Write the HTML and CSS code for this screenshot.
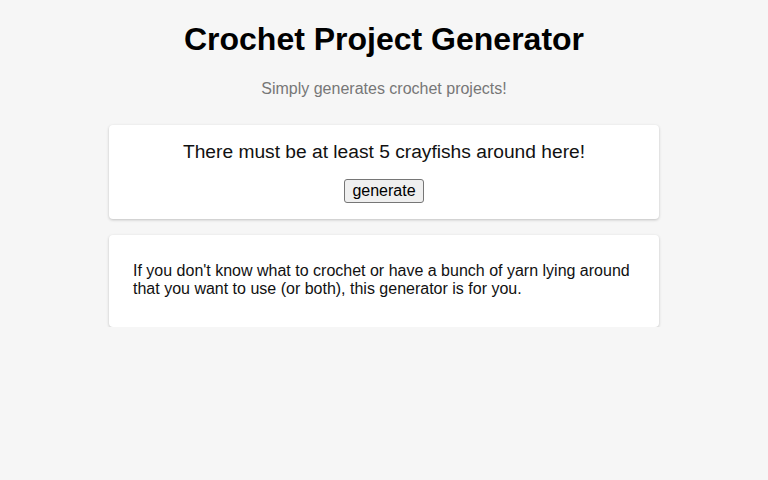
FILE: index.html
```html
<!DOCTYPE html>
<html>
<head>
<meta charset="utf-8">
<link rel="stylesheet" href="styles.css">
</head>
<body>
<header class="header">
  <h1 class="title">Crochet Project Generator</h1>
  <p class="subtitle">Simply generates crochet projects!</p>
</header>
<main class="main">
  <section class="card card-gen">
    <p class="result">There must be at least 5 crayfishs around here!</p>
    <button class="btn">generate</button>
  </section>
  <section class="card card-info">
    <p class="info">If you don't know what to crochet or have a bunch of yarn lying around that you want to use (or both), this generator is for you.</p>
  </section>
</main>
</body>
</html>
```
FILE: styles.css
```css
html, body {
  margin: 0;
  padding: 0;
  background: #f6f6f6;
  font-family: "Liberation Sans", Arial, sans-serif;
  color: #111;
}
.header {
  text-align: center;
  padding-top: 21px;
}
.title {
  margin: 0;
  font-size: 32px;
  font-weight: bold;
  line-height: 37px;
  color: #000;
}
.subtitle {
  margin: 22px 0 0;
  font-size: 16px;
  line-height: 18px;
  color: #777;
}
.main {
  width: 550px;
  margin: 27px auto 0;
  display: flex;
  flex-direction: column;
  gap: 16px;
}
.card {
  background: #fff;
  border-radius: 4px;
  box-shadow: 0 1px 3px rgba(0, 0, 0, 0.22);
}
.card-gen {
  padding: 16px 24px;
  display: flex;
  flex-direction: column;
  align-items: center;
  gap: 16px;
}
.result {
  margin: 0;
  font-size: 19.2px;
  line-height: 22px;
  color: #111;
}
.btn {
  font-family: "Liberation Sans", Arial, sans-serif;
  font-size: 16px;
  line-height: 18px;
  padding: 1px 6px;
  color: #000;
  background: #efefef;
  border: 1px solid #767676;
  border-radius: 3px;
  height: 24px;
  width: 80px;
}
.card-info {
  padding: 27px 24px 29px;
}
.info {
  margin: 0;
  font-size: 16px;
  line-height: 18px;
  color: #111;
}
```
